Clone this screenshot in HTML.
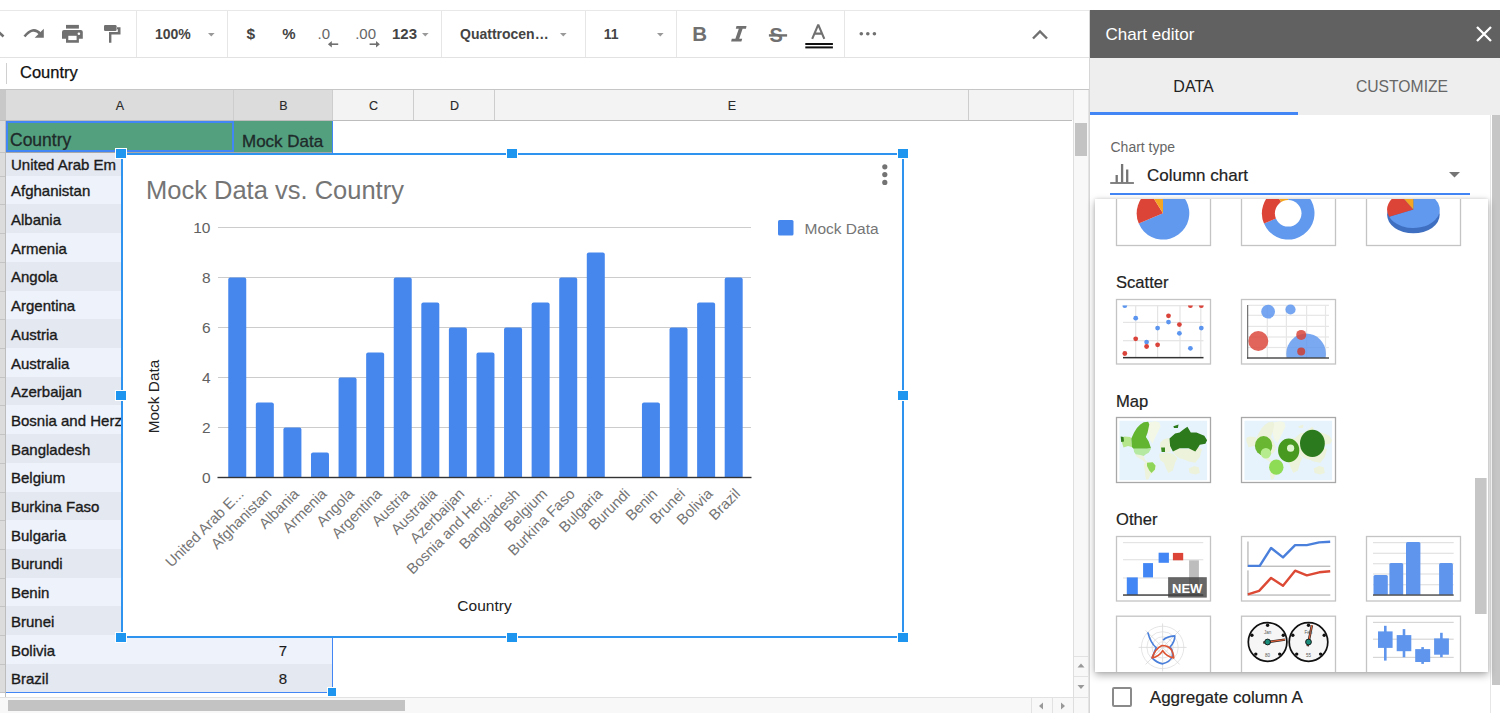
<!DOCTYPE html>
<html><head><meta charset="utf-8">
<style>
*{box-sizing:border-box;margin:0;padding:0}
html,body{width:1500px;height:713px;overflow:hidden;background:#fff;font-family:"Liberation Sans",sans-serif;position:relative}
.a{position:absolute}
svg{position:absolute;overflow:visible}
</style></head>
<body>

<div class="a" style="left:0px;top:10px;width:1090px;height:1px;background:#e8e8e8;"></div>
<div class="a" style="left:0px;top:57px;width:1090px;height:1px;background:#e2e2e2;"></div>
<div class="a" style="left:136px;top:11px;width:1px;height:46px;background:#e6e6e6;"></div>
<div class="a" style="left:227px;top:11px;width:1px;height:46px;background:#e6e6e6;"></div>
<div class="a" style="left:441px;top:11px;width:1px;height:46px;background:#e6e6e6;"></div>
<div class="a" style="left:585px;top:11px;width:1px;height:46px;background:#e6e6e6;"></div>
<div class="a" style="left:676px;top:11px;width:1px;height:46px;background:#e6e6e6;"></div>
<div class="a" style="left:844px;top:11px;width:1px;height:46px;background:#e6e6e6;"></div>
<svg style="left:0;top:0" width="1090" height="57">
<path d="M-2 31.5 L3.5 36.5" stroke="#707070" stroke-width="2.6" fill="none"/>
<path d="M24.5 36.5 Q33 26 40 33.5" stroke="#707070" stroke-width="2.6" fill="none"/>
<path d="M43.8 28.8 V37.8 H34.7 Z" fill="#707070"/>
<rect x="66" y="24.9" width="12.9" height="3.7" fill="#707070"/>
<path d="M64 30.1 H80.8 Q82.8 30.1 82.8 32.1 V38.8 H78.9 V42.7 H66 V38.8 H62 V32.1 Q62 30.1 64 30.1 Z" fill="#707070"/>
<rect x="68.3" y="35.8" width="8.3" height="4.3" fill="#fff"/>
<circle cx="78.9" cy="33.8" r="1.3" fill="#fff"/>
<rect x="104" y="24.9" width="12.6" height="6.1" rx="1.3" fill="#707070"/>
<path d="M117 27.3 H120.5 V34.5 H111.4 V42.7 H109 V31.9 H117.8 V29.2 H117 Z" fill="#707070"/>
<rect x="768.9" y="34.2" width="18.2" height="2.4" fill="#707070"/>
<path d="M736.5 26.1 H746.5 L746 28.8 H742.6 L739.2 38.8 H742.2 L741.4 41.5 H731.1 L731.8 38.8 H735.4 L738.8 28.8 H735.8 Z" fill="#707070"/>
<rect x="805.3" y="43" width="27.6" height="2" fill="#111"/>
<rect x="805.3" y="46.4" width="27.6" height="2" fill="#111"/>
<circle cx="861.3" cy="33.7" r="1.8" fill="#707070"/>
<circle cx="867.8" cy="33.7" r="1.8" fill="#707070"/>
<circle cx="874.4" cy="33.7" r="1.8" fill="#707070"/>
<path d="M338.2 44.2 H330" stroke="#707070" stroke-width="1.6"/><path d="M327.9 44.2 L331.8 41 V47.4 Z" fill="#707070"/>
<path d="M369.6 44.2 H377.8" stroke="#707070" stroke-width="1.6"/><path d="M379.9 44.2 L376 41 V47.4 Z" fill="#707070"/>
<path d="M1033 38.5 L1040 31.5 L1047 38.5" stroke="#707070" stroke-width="2.4" fill="none"/>
</svg>
<div class="a" style="left:155px;top:27.10px;font-size:14px;line-height:14px;color:#444;font-weight:bold;white-space:nowrap;">100%</div>
<svg style="left:208px;top:33px" width="7" height="4"><path d="M0 0H6.6L3.3 3.5Z" fill="#999"/></svg>
<div class="a" style="left:246.5px;top:26.03px;font-size:15.5px;line-height:15.5px;color:#444;font-weight:bold;white-space:nowrap;">$</div>
<div class="a" style="left:282.3px;top:26.45px;font-size:15px;line-height:15px;color:#444;font-weight:bold;white-space:nowrap;">%</div>
<div class="a" style="left:317.6px;top:26.05px;font-size:15px;line-height:15px;color:#666;font-weight:normal;white-space:nowrap;">.0</div>
<div class="a" style="left:355.2px;top:26.05px;font-size:15px;line-height:15px;color:#666;font-weight:normal;white-space:nowrap;">.00</div>
<div class="a" style="left:392px;top:26.45px;font-size:15px;line-height:15px;color:#444;font-weight:bold;white-space:nowrap;">123</div>
<svg style="left:422px;top:33px" width="7" height="4"><path d="M0 0H6.6L3.3 3.5Z" fill="#999"/></svg>
<div class="a" style="left:460px;top:27.20px;font-size:14px;line-height:14px;color:#444;font-weight:bold;white-space:nowrap;">Quattrocen…</div>
<svg style="left:560px;top:32.7px" width="7" height="4"><path d="M0 0H6.6L3.3 3.5Z" fill="#999"/></svg>
<div class="a" style="left:603.8px;top:27.20px;font-size:14px;line-height:14px;color:#444;font-weight:bold;white-space:nowrap;">11</div>
<svg style="left:656.8px;top:32.7px" width="7" height="4"><path d="M0 0H6.6L3.3 3.5Z" fill="#999"/></svg>
<div class="a" style="left:692.3px;top:24.07px;font-size:20.5px;line-height:20.5px;color:#707070;font-weight:bold;white-space:nowrap;">B</div>
<div class="a" style="left:769.6px;top:24.50px;font-size:20px;line-height:20px;color:#707070;font-weight:bold;white-space:nowrap;">S</div>
<svg style="left:0;top:0" width="1090" height="57"><path d="M812.2 38.8 L818.25 24.6 L824.3 38.8 M814.3 33.6 H822.2" stroke="#707070" stroke-width="2.1" stroke-linejoin="bevel" fill="none"/></svg>
<div class="a" style="left:6px;top:63px;width:1px;height:21px;background:#d0d0d0;"></div>
<div class="a" style="left:20px;top:64.47px;font-size:16.5px;line-height:16.5px;color:#111;font-weight:normal;white-space:nowrap;-webkit-text-stroke:0.25px #111">Country</div>
<div class="a" style="left:0px;top:89px;width:1090px;height:1px;background:#c6c6c6;"></div>
<div class="a" style="left:0px;top:90px;width:1072px;height:30px;background:#f3f3f3;"></div>
<div class="a" style="left:0px;top:90px;width:6px;height:30px;background:#c8c8c8;"></div>
<div class="a" style="left:6px;top:90px;width:228px;height:30px;background:#dcdcdc;"></div>
<div class="a" style="left:233px;top:90px;width:1px;height:30px;background:#cdcdcd;"></div>
<div class="a" style="left:-180.0px;width:600px;text-align:center;top:99.58px;font-size:12.5px;line-height:12.5px;color:#2a2a2a;font-weight:normal;white-space:nowrap;-webkit-text-stroke:0.15px #2a2a2a">A</div>
<div class="a" style="left:234px;top:90px;width:99px;height:30px;background:#dcdcdc;"></div>
<div class="a" style="left:332px;top:90px;width:1px;height:30px;background:#cdcdcd;"></div>
<div class="a" style="left:-16.5px;width:600px;text-align:center;top:99.58px;font-size:12.5px;line-height:12.5px;color:#2a2a2a;font-weight:normal;white-space:nowrap;-webkit-text-stroke:0.15px #2a2a2a">B</div>
<div class="a" style="left:413px;top:90px;width:1px;height:30px;background:#cdcdcd;"></div>
<div class="a" style="left:73.5px;width:600px;text-align:center;top:99.58px;font-size:12.5px;line-height:12.5px;color:#2a2a2a;font-weight:normal;white-space:nowrap;-webkit-text-stroke:0.15px #2a2a2a">C</div>
<div class="a" style="left:494px;top:90px;width:1px;height:30px;background:#cdcdcd;"></div>
<div class="a" style="left:154.5px;width:600px;text-align:center;top:99.58px;font-size:12.5px;line-height:12.5px;color:#2a2a2a;font-weight:normal;white-space:nowrap;-webkit-text-stroke:0.15px #2a2a2a">D</div>
<div class="a" style="left:968px;top:90px;width:1px;height:30px;background:#cdcdcd;"></div>
<div class="a" style="left:432.0px;width:600px;text-align:center;top:99.58px;font-size:12.5px;line-height:12.5px;color:#2a2a2a;font-weight:normal;white-space:nowrap;-webkit-text-stroke:0.15px #2a2a2a">E</div>
<div class="a" style="left:1071px;top:90px;width:1px;height:30px;background:#cdcdcd;"></div>
<div class="a" style="left:0px;top:120px;width:1072px;height:1px;background:#bdbdbd;"></div>
<div class="a" style="left:0px;top:121px;width:6px;height:571px;background:#dcdcdc;"></div>
<div class="a" style="left:5px;top:121px;width:1px;height:576px;background:#bdbdbd;"></div>
<div class="a" style="left:6px;top:121px;width:327px;height:31px;background:#53a07f;"></div>
<div class="a" style="left:10px;top:132.12px;font-size:17.5px;line-height:17.5px;color:#1f2a2a;font-weight:normal;white-space:nowrap;-webkit-text-stroke:0.3px #1f2a2a">Country</div>
<div class="a" style="left:242px;top:132.55px;font-size:17px;line-height:17px;color:#1f2a2a;font-weight:normal;white-space:nowrap;-webkit-text-stroke:0.3px #1f2a2a">Mock Data</div>
<div class="a" style="left:6px;top:152px;width:327px;height:24px;background:#e4e8f1;"></div>
<div class="a" style="left:11px;top:157.25px;font-size:15px;line-height:15px;color:#1a1a1a;font-weight:normal;white-space:nowrap;-webkit-text-stroke:0.35px #1a1a1a">United Arab Em</div>
<div class="a" style="left:0px;top:152px;width:6px;height:1px;background:#c4c4c4;"></div>
<div class="a" style="left:6px;top:176px;width:327px;height:28px;background:#eef2fb"></div>
<div class="a" style="left:0px;top:176px;width:6px;height:1px;background:#c4c4c4;"></div>
<div class="a" style="left:11px;top:183.35px;font-size:15px;line-height:15px;color:#1a1a1a;font-weight:normal;white-space:nowrap;-webkit-text-stroke:0.35px #1a1a1a">Afghanistan</div>
<div class="a" style="left:-17px;width:600px;text-align:center;top:183.35px;font-size:15px;line-height:15px;color:#1a1a1a;font-weight:normal;white-space:nowrap;-webkit-text-stroke:0.15px #1a1a1a">3</div>
<div class="a" style="left:6px;top:204px;width:327px;height:29px;background:#e4e8f1"></div>
<div class="a" style="left:0px;top:204px;width:6px;height:1px;background:#c4c4c4;"></div>
<div class="a" style="left:11px;top:212.05px;font-size:15px;line-height:15px;color:#1a1a1a;font-weight:normal;white-space:nowrap;-webkit-text-stroke:0.35px #1a1a1a">Albania</div>
<div class="a" style="left:-17px;width:600px;text-align:center;top:212.05px;font-size:15px;line-height:15px;color:#1a1a1a;font-weight:normal;white-space:nowrap;-webkit-text-stroke:0.15px #1a1a1a">2</div>
<div class="a" style="left:6px;top:233px;width:327px;height:29px;background:#eef2fb"></div>
<div class="a" style="left:0px;top:233px;width:6px;height:1px;background:#c4c4c4;"></div>
<div class="a" style="left:11px;top:240.75px;font-size:15px;line-height:15px;color:#1a1a1a;font-weight:normal;white-space:nowrap;-webkit-text-stroke:0.35px #1a1a1a">Armenia</div>
<div class="a" style="left:-17px;width:600px;text-align:center;top:240.75px;font-size:15px;line-height:15px;color:#1a1a1a;font-weight:normal;white-space:nowrap;-webkit-text-stroke:0.15px #1a1a1a">1</div>
<div class="a" style="left:6px;top:262px;width:327px;height:29px;background:#e4e8f1"></div>
<div class="a" style="left:0px;top:262px;width:6px;height:1px;background:#c4c4c4;"></div>
<div class="a" style="left:11px;top:269.45px;font-size:15px;line-height:15px;color:#1a1a1a;font-weight:normal;white-space:nowrap;-webkit-text-stroke:0.35px #1a1a1a">Angola</div>
<div class="a" style="left:-17px;width:600px;text-align:center;top:269.45px;font-size:15px;line-height:15px;color:#1a1a1a;font-weight:normal;white-space:nowrap;-webkit-text-stroke:0.15px #1a1a1a">4</div>
<div class="a" style="left:6px;top:291px;width:327px;height:28px;background:#eef2fb"></div>
<div class="a" style="left:0px;top:291px;width:6px;height:1px;background:#c4c4c4;"></div>
<div class="a" style="left:11px;top:298.15px;font-size:15px;line-height:15px;color:#1a1a1a;font-weight:normal;white-space:nowrap;-webkit-text-stroke:0.35px #1a1a1a">Argentina</div>
<div class="a" style="left:-17px;width:600px;text-align:center;top:298.15px;font-size:15px;line-height:15px;color:#1a1a1a;font-weight:normal;white-space:nowrap;-webkit-text-stroke:0.15px #1a1a1a">5</div>
<div class="a" style="left:6px;top:319px;width:327px;height:29px;background:#e4e8f1"></div>
<div class="a" style="left:0px;top:319px;width:6px;height:1px;background:#c4c4c4;"></div>
<div class="a" style="left:11px;top:326.85px;font-size:15px;line-height:15px;color:#1a1a1a;font-weight:normal;white-space:nowrap;-webkit-text-stroke:0.35px #1a1a1a">Austria</div>
<div class="a" style="left:-17px;width:600px;text-align:center;top:326.85px;font-size:15px;line-height:15px;color:#1a1a1a;font-weight:normal;white-space:nowrap;-webkit-text-stroke:0.15px #1a1a1a">8</div>
<div class="a" style="left:6px;top:348px;width:327px;height:29px;background:#eef2fb"></div>
<div class="a" style="left:0px;top:348px;width:6px;height:1px;background:#c4c4c4;"></div>
<div class="a" style="left:11px;top:355.55px;font-size:15px;line-height:15px;color:#1a1a1a;font-weight:normal;white-space:nowrap;-webkit-text-stroke:0.35px #1a1a1a">Australia</div>
<div class="a" style="left:-17px;width:600px;text-align:center;top:355.55px;font-size:15px;line-height:15px;color:#1a1a1a;font-weight:normal;white-space:nowrap;-webkit-text-stroke:0.15px #1a1a1a">7</div>
<div class="a" style="left:6px;top:377px;width:327px;height:28px;background:#e4e8f1"></div>
<div class="a" style="left:0px;top:377px;width:6px;height:1px;background:#c4c4c4;"></div>
<div class="a" style="left:11px;top:384.25px;font-size:15px;line-height:15px;color:#1a1a1a;font-weight:normal;white-space:nowrap;-webkit-text-stroke:0.35px #1a1a1a">Azerbaijan</div>
<div class="a" style="left:-17px;width:600px;text-align:center;top:384.25px;font-size:15px;line-height:15px;color:#1a1a1a;font-weight:normal;white-space:nowrap;-webkit-text-stroke:0.15px #1a1a1a">6</div>
<div class="a" style="left:6px;top:405px;width:327px;height:29px;background:#eef2fb"></div>
<div class="a" style="left:0px;top:405px;width:6px;height:1px;background:#c4c4c4;"></div>
<div class="a" style="left:11px;top:412.95px;font-size:15px;line-height:15px;color:#1a1a1a;font-weight:normal;white-space:nowrap;-webkit-text-stroke:0.35px #1a1a1a">Bosnia and Herz</div>
<div class="a" style="left:-17px;width:600px;text-align:center;top:412.95px;font-size:15px;line-height:15px;color:#1a1a1a;font-weight:normal;white-space:nowrap;-webkit-text-stroke:0.15px #1a1a1a">5</div>
<div class="a" style="left:6px;top:434px;width:327px;height:29px;background:#e4e8f1"></div>
<div class="a" style="left:0px;top:434px;width:6px;height:1px;background:#c4c4c4;"></div>
<div class="a" style="left:11px;top:441.65px;font-size:15px;line-height:15px;color:#1a1a1a;font-weight:normal;white-space:nowrap;-webkit-text-stroke:0.35px #1a1a1a">Bangladesh</div>
<div class="a" style="left:-17px;width:600px;text-align:center;top:441.65px;font-size:15px;line-height:15px;color:#1a1a1a;font-weight:normal;white-space:nowrap;-webkit-text-stroke:0.15px #1a1a1a">6</div>
<div class="a" style="left:6px;top:463px;width:327px;height:29px;background:#eef2fb"></div>
<div class="a" style="left:0px;top:463px;width:6px;height:1px;background:#c4c4c4;"></div>
<div class="a" style="left:11px;top:470.35px;font-size:15px;line-height:15px;color:#1a1a1a;font-weight:normal;white-space:nowrap;-webkit-text-stroke:0.35px #1a1a1a">Belgium</div>
<div class="a" style="left:-17px;width:600px;text-align:center;top:470.35px;font-size:15px;line-height:15px;color:#1a1a1a;font-weight:normal;white-space:nowrap;-webkit-text-stroke:0.15px #1a1a1a">7</div>
<div class="a" style="left:6px;top:492px;width:327px;height:28px;background:#e4e8f1"></div>
<div class="a" style="left:0px;top:492px;width:6px;height:1px;background:#c4c4c4;"></div>
<div class="a" style="left:11px;top:499.05px;font-size:15px;line-height:15px;color:#1a1a1a;font-weight:normal;white-space:nowrap;-webkit-text-stroke:0.35px #1a1a1a">Burkina Faso</div>
<div class="a" style="left:-17px;width:600px;text-align:center;top:499.05px;font-size:15px;line-height:15px;color:#1a1a1a;font-weight:normal;white-space:nowrap;-webkit-text-stroke:0.15px #1a1a1a">8</div>
<div class="a" style="left:6px;top:520px;width:327px;height:29px;background:#eef2fb"></div>
<div class="a" style="left:0px;top:520px;width:6px;height:1px;background:#c4c4c4;"></div>
<div class="a" style="left:11px;top:527.75px;font-size:15px;line-height:15px;color:#1a1a1a;font-weight:normal;white-space:nowrap;-webkit-text-stroke:0.35px #1a1a1a">Bulgaria</div>
<div class="a" style="left:-17px;width:600px;text-align:center;top:527.75px;font-size:15px;line-height:15px;color:#1a1a1a;font-weight:normal;white-space:nowrap;-webkit-text-stroke:0.15px #1a1a1a">9</div>
<div class="a" style="left:6px;top:549px;width:327px;height:29px;background:#e4e8f1"></div>
<div class="a" style="left:0px;top:549px;width:6px;height:1px;background:#c4c4c4;"></div>
<div class="a" style="left:11px;top:556.45px;font-size:15px;line-height:15px;color:#1a1a1a;font-weight:normal;white-space:nowrap;-webkit-text-stroke:0.35px #1a1a1a">Burundi</div>
<div class="a" style="left:-17px;width:600px;text-align:center;top:556.45px;font-size:15px;line-height:15px;color:#1a1a1a;font-weight:normal;white-space:nowrap;-webkit-text-stroke:0.15px #1a1a1a">0</div>
<div class="a" style="left:6px;top:578px;width:327px;height:28px;background:#eef2fb"></div>
<div class="a" style="left:0px;top:578px;width:6px;height:1px;background:#c4c4c4;"></div>
<div class="a" style="left:11px;top:585.15px;font-size:15px;line-height:15px;color:#1a1a1a;font-weight:normal;white-space:nowrap;-webkit-text-stroke:0.35px #1a1a1a">Benin</div>
<div class="a" style="left:-17px;width:600px;text-align:center;top:585.15px;font-size:15px;line-height:15px;color:#1a1a1a;font-weight:normal;white-space:nowrap;-webkit-text-stroke:0.15px #1a1a1a">3</div>
<div class="a" style="left:6px;top:606px;width:327px;height:29px;background:#e4e8f1"></div>
<div class="a" style="left:0px;top:606px;width:6px;height:1px;background:#c4c4c4;"></div>
<div class="a" style="left:11px;top:613.85px;font-size:15px;line-height:15px;color:#1a1a1a;font-weight:normal;white-space:nowrap;-webkit-text-stroke:0.35px #1a1a1a">Brunei</div>
<div class="a" style="left:-17px;width:600px;text-align:center;top:613.85px;font-size:15px;line-height:15px;color:#1a1a1a;font-weight:normal;white-space:nowrap;-webkit-text-stroke:0.15px #1a1a1a">6</div>
<div class="a" style="left:6px;top:635px;width:327px;height:29px;background:#eef2fb"></div>
<div class="a" style="left:0px;top:635px;width:6px;height:1px;background:#c4c4c4;"></div>
<div class="a" style="left:11px;top:642.55px;font-size:15px;line-height:15px;color:#1a1a1a;font-weight:normal;white-space:nowrap;-webkit-text-stroke:0.35px #1a1a1a">Bolivia</div>
<div class="a" style="left:-17px;width:600px;text-align:center;top:642.55px;font-size:15px;line-height:15px;color:#1a1a1a;font-weight:normal;white-space:nowrap;-webkit-text-stroke:0.15px #1a1a1a">7</div>
<div class="a" style="left:6px;top:664px;width:327px;height:28px;background:#e4e8f1"></div>
<div class="a" style="left:0px;top:664px;width:6px;height:1px;background:#c4c4c4;"></div>
<div class="a" style="left:11px;top:671.25px;font-size:15px;line-height:15px;color:#1a1a1a;font-weight:normal;white-space:nowrap;-webkit-text-stroke:0.35px #1a1a1a">Brazil</div>
<div class="a" style="left:-17px;width:600px;text-align:center;top:671.25px;font-size:15px;line-height:15px;color:#1a1a1a;font-weight:normal;white-space:nowrap;-webkit-text-stroke:0.15px #1a1a1a">8</div>
<div class="a" style="left:0px;top:692px;width:6px;height:1px;background:#c4c4c4;"></div>
<div class="a" style="left:6px;top:152px;width:327px;height:1px;background:#a8a8a8;"></div>
<div class="a" style="left:6px;top:121px;width:228px;height:2px;background:#4285f4;"></div>
<div class="a" style="left:6px;top:150px;width:228px;height:2px;background:#4285f4;"></div>
<div class="a" style="left:6px;top:121px;width:2px;height:31px;background:#4285f4;"></div>
<div class="a" style="left:232px;top:121px;width:2px;height:31px;background:#4285f4;"></div>
<div class="a" style="left:5px;top:152px;width:1px;height:541px;background:#bdbdbd;"></div>
<div class="a" style="left:332px;top:121px;width:1px;height:572px;background:#4285f4;"></div>
<div class="a" style="left:6px;top:692px;width:327px;height:1px;background:#4285f4;"></div>
<div class="a" style="left:327px;top:687px;width:10px;height:10px;background:#1e96f0;border:1px solid #fff"></div>
<div class="a" style="left:121px;top:153px;width:783px;height:485px;background:#fff;border:2px solid #2e93ee"></div>
<svg style="left:0;top:0" width="1500" height="713" viewBox="0 0 1500 713">
<rect x="218" y="427.0" width="533" height="1" fill="#cccccc"/>
<rect x="218" y="377.0" width="533" height="1" fill="#cccccc"/>
<rect x="218" y="327.0" width="533" height="1" fill="#cccccc"/>
<rect x="218" y="277.0" width="533" height="1" fill="#cccccc"/>
<rect x="218" y="227.0" width="533" height="1" fill="#cccccc"/>
<text x="210.5" y="483.1" text-anchor="end" font-family="Liberation Sans" font-size="15.5" fill="#616161">0</text>
<text x="210.5" y="433.1" text-anchor="end" font-family="Liberation Sans" font-size="15.5" fill="#616161">2</text>
<text x="210.5" y="383.1" text-anchor="end" font-family="Liberation Sans" font-size="15.5" fill="#616161">4</text>
<text x="210.5" y="333.1" text-anchor="end" font-family="Liberation Sans" font-size="15.5" fill="#616161">6</text>
<text x="210.5" y="283.1" text-anchor="end" font-family="Liberation Sans" font-size="15.5" fill="#616161">8</text>
<text x="210.5" y="233.1" text-anchor="end" font-family="Liberation Sans" font-size="15.5" fill="#616161">10</text>
<path d="M228.25 477.5V279.5Q228.25 277.5 230.25 277.5H244.25Q246.25 277.5 246.25 279.5V477.5Z" fill="#4687ee"/>
<text transform="translate(244.75 494.8) rotate(-45)" text-anchor="end" font-family="Liberation Sans" font-size="14.8" fill="#757575">United Arab E...</text>
<path d="M255.82999999999998 477.5V404.5Q255.82999999999998 402.5 257.83 402.5H271.83Q273.83 402.5 273.83 404.5V477.5Z" fill="#4687ee"/>
<text transform="translate(272.33 494.8) rotate(-45)" text-anchor="end" font-family="Liberation Sans" font-size="14.8" fill="#757575">Afghanistan</text>
<path d="M283.40999999999997 477.5V429.5Q283.40999999999997 427.5 285.40999999999997 427.5H299.40999999999997Q301.40999999999997 427.5 301.40999999999997 429.5V477.5Z" fill="#4687ee"/>
<text transform="translate(299.90999999999997 494.8) rotate(-45)" text-anchor="end" font-family="Liberation Sans" font-size="14.8" fill="#757575">Albania</text>
<path d="M310.99 477.5V454.5Q310.99 452.5 312.99 452.5H326.99Q328.99 452.5 328.99 454.5V477.5Z" fill="#4687ee"/>
<text transform="translate(327.49 494.8) rotate(-45)" text-anchor="end" font-family="Liberation Sans" font-size="14.8" fill="#757575">Armenia</text>
<path d="M338.57 477.5V379.5Q338.57 377.5 340.57 377.5H354.57Q356.57 377.5 356.57 379.5V477.5Z" fill="#4687ee"/>
<text transform="translate(355.07 494.8) rotate(-45)" text-anchor="end" font-family="Liberation Sans" font-size="14.8" fill="#757575">Angola</text>
<path d="M366.15 477.5V354.5Q366.15 352.5 368.15 352.5H382.15Q384.15 352.5 384.15 354.5V477.5Z" fill="#4687ee"/>
<text transform="translate(382.65 494.8) rotate(-45)" text-anchor="end" font-family="Liberation Sans" font-size="14.8" fill="#757575">Argentina</text>
<path d="M393.73 477.5V279.5Q393.73 277.5 395.73 277.5H409.73Q411.73 277.5 411.73 279.5V477.5Z" fill="#4687ee"/>
<text transform="translate(410.23 494.8) rotate(-45)" text-anchor="end" font-family="Liberation Sans" font-size="14.8" fill="#757575">Austria</text>
<path d="M421.31 477.5V304.5Q421.31 302.5 423.31 302.5H437.31Q439.31 302.5 439.31 304.5V477.5Z" fill="#4687ee"/>
<text transform="translate(437.81 494.8) rotate(-45)" text-anchor="end" font-family="Liberation Sans" font-size="14.8" fill="#757575">Australia</text>
<path d="M448.89 477.5V329.5Q448.89 327.5 450.89 327.5H464.89Q466.89 327.5 466.89 329.5V477.5Z" fill="#4687ee"/>
<text transform="translate(465.39 494.8) rotate(-45)" text-anchor="end" font-family="Liberation Sans" font-size="14.8" fill="#757575">Azerbaijan</text>
<path d="M476.46999999999997 477.5V354.5Q476.46999999999997 352.5 478.46999999999997 352.5H492.46999999999997Q494.46999999999997 352.5 494.46999999999997 354.5V477.5Z" fill="#4687ee"/>
<text transform="translate(492.96999999999997 494.8) rotate(-45)" text-anchor="end" font-family="Liberation Sans" font-size="14.8" fill="#757575">Bosnia and Her...</text>
<path d="M504.04999999999995 477.5V329.5Q504.04999999999995 327.5 506.04999999999995 327.5H520.05Q522.05 327.5 522.05 329.5V477.5Z" fill="#4687ee"/>
<text transform="translate(520.55 494.8) rotate(-45)" text-anchor="end" font-family="Liberation Sans" font-size="14.8" fill="#757575">Bangladesh</text>
<path d="M531.63 477.5V304.5Q531.63 302.5 533.63 302.5H547.63Q549.63 302.5 549.63 304.5V477.5Z" fill="#4687ee"/>
<text transform="translate(548.13 494.8) rotate(-45)" text-anchor="end" font-family="Liberation Sans" font-size="14.8" fill="#757575">Belgium</text>
<path d="M559.21 477.5V279.5Q559.21 277.5 561.21 277.5H575.21Q577.21 277.5 577.21 279.5V477.5Z" fill="#4687ee"/>
<text transform="translate(575.71 494.8) rotate(-45)" text-anchor="end" font-family="Liberation Sans" font-size="14.8" fill="#757575">Burkina Faso</text>
<path d="M586.79 477.5V254.5Q586.79 252.5 588.79 252.5H602.79Q604.79 252.5 604.79 254.5V477.5Z" fill="#4687ee"/>
<text transform="translate(603.29 494.8) rotate(-45)" text-anchor="end" font-family="Liberation Sans" font-size="14.8" fill="#757575">Bulgaria</text>
<text transform="translate(630.87 494.8) rotate(-45)" text-anchor="end" font-family="Liberation Sans" font-size="14.8" fill="#757575">Burundi</text>
<path d="M641.95 477.5V404.5Q641.95 402.5 643.95 402.5H657.95Q659.95 402.5 659.95 404.5V477.5Z" fill="#4687ee"/>
<text transform="translate(658.45 494.8) rotate(-45)" text-anchor="end" font-family="Liberation Sans" font-size="14.8" fill="#757575">Benin</text>
<path d="M669.53 477.5V329.5Q669.53 327.5 671.53 327.5H685.53Q687.53 327.5 687.53 329.5V477.5Z" fill="#4687ee"/>
<text transform="translate(686.03 494.8) rotate(-45)" text-anchor="end" font-family="Liberation Sans" font-size="14.8" fill="#757575">Brunei</text>
<path d="M697.1099999999999 477.5V304.5Q697.1099999999999 302.5 699.1099999999999 302.5H713.1099999999999Q715.1099999999999 302.5 715.1099999999999 304.5V477.5Z" fill="#4687ee"/>
<text transform="translate(713.6099999999999 494.8) rotate(-45)" text-anchor="end" font-family="Liberation Sans" font-size="14.8" fill="#757575">Bolivia</text>
<path d="M724.6899999999999 477.5V279.5Q724.6899999999999 277.5 726.6899999999999 277.5H740.6899999999999Q742.6899999999999 277.5 742.6899999999999 279.5V477.5Z" fill="#4687ee"/>
<text transform="translate(741.1899999999999 494.8) rotate(-45)" text-anchor="end" font-family="Liberation Sans" font-size="14.8" fill="#757575">Brazil</text>
<rect x="217.5" y="476.8" width="534" height="1.4" fill="#333"/>
<text x="146" y="199" font-family="Liberation Sans" font-size="25.5" fill="#757575">Mock Data vs. Country</text>
<text transform="translate(158.5 396.5) rotate(-90)" text-anchor="middle" font-family="Liberation Sans" font-size="15.4" fill="#222">Mock Data</text>
<text x="484.5" y="611" text-anchor="middle" font-family="Liberation Sans" font-size="15.5" fill="#222">Country</text>
<rect x="778" y="220" width="15.5" height="15.5" rx="1.5" fill="#4687ee"/>
<text x="804.5" y="234" font-family="Liberation Sans" font-size="15.5" fill="#757575">Mock Data</text>
<circle cx="884.8" cy="166.8" r="2.6" fill="#737373"/>
<circle cx="884.8" cy="174.6" r="2.6" fill="#737373"/>
<circle cx="884.8" cy="182.4" r="2.6" fill="#737373"/>
</svg>
<div class="a" style="left:115px;top:147.5px;width:12px;height:11px;background:#1e96f0;border:1px solid #fff"></div>
<div class="a" style="left:506px;top:147.5px;width:12px;height:11px;background:#1e96f0;border:1px solid #fff"></div>
<div class="a" style="left:897px;top:147.5px;width:12px;height:11px;background:#1e96f0;border:1px solid #fff"></div>
<div class="a" style="left:115px;top:389.5px;width:12px;height:11px;background:#1e96f0;border:1px solid #fff"></div>
<div class="a" style="left:897px;top:389.5px;width:12px;height:11px;background:#1e96f0;border:1px solid #fff"></div>
<div class="a" style="left:115px;top:631.5px;width:12px;height:11px;background:#1e96f0;border:1px solid #fff"></div>
<div class="a" style="left:506px;top:631.5px;width:12px;height:11px;background:#1e96f0;border:1px solid #fff"></div>
<div class="a" style="left:897px;top:631.5px;width:12px;height:11px;background:#1e96f0;border:1px solid #fff"></div>
<div class="a" style="left:969px;top:90px;width:104px;height:30px;background:#f3f3f3;"></div>
<div class="a" style="left:1073px;top:90px;width:16px;height:623px;background:#f8f8f8;"></div>
<div class="a" style="left:1073px;top:90px;width:1px;height:623px;background:#dedede;"></div>
<div class="a" style="left:1088px;top:90px;width:1px;height:623px;background:#e4e4e4;"></div>
<div class="a" style="left:1075px;top:123px;width:12px;height:33px;background:#c3c3c3;"></div>
<div class="a" style="left:1074px;top:656px;width:14px;height:1px;background:#e2e2e2;"></div>
<div class="a" style="left:1074px;top:676px;width:14px;height:1px;background:#e2e2e2;"></div>
<div class="a" style="left:1074px;top:697px;width:14px;height:1px;background:#e2e2e2;"></div>
<div class="a" style="left:0px;top:697px;width:1073px;height:1px;background:#e2e2e2;"></div>
<div class="a" style="left:0px;top:698px;width:1073px;height:15px;background:#f8f8f8;"></div>
<div class="a" style="left:8px;top:700px;width:397px;height:11px;background:#c3c3c3;"></div>
<div class="a" style="left:1031px;top:698px;width:1px;height:15px;background:#e2e2e2;"></div>
<div class="a" style="left:1052px;top:698px;width:1px;height:15px;background:#e2e2e2;"></div>
<svg style="left:0;top:0" width="1500" height="713"><path d="M1077.5 667.5 H1084.5 L1081 663.5 Z" fill="#999"/><path d="M1077.5 685 H1084.5 L1081 689 Z" fill="#999"/><path d="M1043 702.5 V709.5 L1039 706 Z" fill="#999"/><path d="M1061 702.5 V709.5 L1065 706 Z" fill="#999"/></svg>
<div class="a" style="left:1089px;top:0px;width:411px;height:713px;background:#fff;"></div>
<div class="a" style="left:1089px;top:10px;width:411px;height:48px;background:#616161;"></div>
<div class="a" style="left:1105.5px;top:25.55px;font-size:17px;line-height:17px;color:#fff;font-weight:normal;white-space:nowrap;">Chart editor</div>
<svg style="left:1476px;top:26px" width="16" height="16"><path d="M1 1 L15 15 M15 1 L1 15" stroke="#fff" stroke-width="2.3"/></svg>
<div class="a" style="left:1089px;top:58px;width:411px;height:57px;background:#eeeeee;"></div>
<div class="a" style="left:893.5px;width:600px;text-align:center;top:78.90px;font-size:16px;line-height:16px;color:#222;font-weight:normal;white-space:nowrap;">DATA</div>
<div class="a" style="left:1102px;width:600px;text-align:center;top:79.16px;font-size:15.7px;line-height:15.7px;color:#666;font-weight:normal;white-space:nowrap;">CUSTOMIZE</div>
<div class="a" style="left:1089px;top:112px;width:209px;height:3px;background:#4285f4;"></div>
<div class="a" style="left:1089px;top:10px;width:1px;height:703px;background:#d6d6d6;"></div>
<div class="a" style="left:1490px;top:115px;width:1px;height:598px;background:#e6e6e6;"></div>
<div class="a" style="left:1492px;top:115px;width:8px;height:570px;background:#c6c6c6;"></div>
<div class="a" style="left:1110.5px;top:140.10px;font-size:14px;line-height:14px;color:#666;font-weight:normal;white-space:nowrap;">Chart type</div>
<svg style="left:1110px;top:163px" width="25" height="23"><path d="M0.2 20 H23.9" stroke="#757575" stroke-width="1.8"/><path d="M6.7 19.5 V11.9 M12.1 19.5 V1.1 M17.2 19.5 V6.5" stroke="#757575" stroke-width="2.3"/></svg>
<div class="a" style="left:1147px;top:166.55px;font-size:17px;line-height:17px;color:#222;font-weight:normal;white-space:nowrap;-webkit-text-stroke:0.2px #222">Column chart</div>
<svg style="left:1449px;top:172px" width="12" height="7"><path d="M0 0 H11 L5.5 5.5 Z" fill="#757575"/></svg>
<div class="a" style="left:1110px;top:193px;width:360px;height:2px;background:#4285f4;"></div>
<div class="a" style="left:1095px;top:199px;width:393px;height:473px;background:#fff;box-shadow:0 3px 8px rgba(0,0,0,0.32), 0 0 3px rgba(0,0,0,0.12);overflow:hidden">
<svg style="left:0;top:0" width="393" height="474">
<rect x="21.5" y="-18.5" width="94" height="65" fill="#fff" stroke="#c4c4c4" stroke-width="1.3"/>
<rect x="146.5" y="-18.5" width="94" height="65" fill="#fff" stroke="#c4c4c4" stroke-width="1.3"/>
<rect x="271.5" y="-18.5" width="94" height="65" fill="#fff" stroke="#c4c4c4" stroke-width="1.3"/>
<path d="M68 14.300000000000011 L68.00 -12.00 A26.3 26.3 0 1 1 43.79 24.58 Z" fill="#6199ee"/>
<path d="M68 14.300000000000011 L43.79 24.58 A26.3 26.3 0 0 1 54.06 -8.00 Z" fill="#dc4437"/>
<path d="M68 14.300000000000011 L54.06 -8.00 A26.3 26.3 0 0 1 68.00 -12.00 Z" fill="#f4a622"/>
<path d="M193.20000000000005 14.300000000000011 L193.20 -12.00 A26.3 26.3 0 1 1 168.99 24.58 Z" fill="#6199ee"/>
<path d="M193.20000000000005 14.300000000000011 L168.99 24.58 A26.3 26.3 0 0 1 179.26 -8.00 Z" fill="#dc4437"/>
<path d="M193.20000000000005 14.300000000000011 L179.26 -8.00 A26.3 26.3 0 0 1 193.20 -12.00 Z" fill="#f4a622"/>
<circle cx="193.20000000000005" cy="14.300000000000011" r="13.3" fill="#fff"/>
<ellipse cx="318.4000000000001" cy="15.800000000000011" rx="26.3" ry="18.5" fill="#3f6fc0"/>
<path d="M318.4000000000001 10.5 L318.40 -8.00 A26.3 18.5 0 1 1 294.19 17.73 Z" fill="#6199ee"/>
<path d="M318.4000000000001 10.5 L294.19 17.73 A26.3 18.5 0 0 1 304.46 -5.19 Z" fill="#dc4437"/>
<path d="M318.4000000000001 10.5 L304.46 -5.19 A26.3 18.5 0 0 1 318.40 -8.00 Z" fill="#f4a622"/>
<rect x="21.5" y="100.5" width="94" height="64.5" fill="#fff" stroke="#c4c4c4" stroke-width="1.3"/>
<g>
<rect x="28" y="106.09999999999997" width="80.5" height="1.2" fill="#e4e4e4"/>
<rect x="28" y="122.79999999999995" width="80.5" height="1.2" fill="#e4e4e4"/>
<rect x="28" y="141.09999999999997" width="80.5" height="1.2" fill="#e4e4e4"/>
<rect x="40.100000000000136" y="106.69999999999999" width="1.2" height="52" fill="#e4e4e4"/>
<rect x="62.0" y="106.69999999999999" width="1.2" height="52" fill="#e4e4e4"/>
<rect x="84.40000000000009" y="106.69999999999999" width="1.2" height="52" fill="#e4e4e4"/>
<rect x="105.20000000000005" y="106.69999999999999" width="1.2" height="52" fill="#e4e4e4"/>
<clipPath id="cs"><rect x="21" y="106.5" width="95" height="60"/></clipPath><g clip-path="url(#cs)">
<circle cx="29.799999999999955" cy="106.69999999999999" r="2.4" fill="#5b95ef"/>
<circle cx="40.700000000000045" cy="119.19999999999999" r="2.4" fill="#5b95ef"/>
<circle cx="62.59999999999991" cy="129.10000000000002" r="2.4" fill="#5b95ef"/>
<circle cx="73.5" cy="123.10000000000002" r="2.4" fill="#5b95ef"/>
<circle cx="84.40000000000009" cy="134.3" r="2.4" fill="#5b95ef"/>
<circle cx="51.59999999999991" cy="143.10000000000002" r="2.4" fill="#5b95ef"/>
<circle cx="95.40000000000009" cy="149.3" r="2.4" fill="#5b95ef"/>
<circle cx="106.29999999999995" cy="129.10000000000002" r="2.4" fill="#5b95ef"/>
<circle cx="29.799999999999955" cy="154.5" r="2.4" fill="#d9433a"/>
<circle cx="40.700000000000045" cy="139.8" r="2.4" fill="#d9433a"/>
<circle cx="51.59999999999991" cy="147.5" r="2.4" fill="#d9433a"/>
<circle cx="62.59999999999991" cy="145.8" r="2.4" fill="#d9433a"/>
<circle cx="73.5" cy="116.80000000000001" r="2.4" fill="#d9433a"/>
<circle cx="84.40000000000009" cy="125.60000000000002" r="2.4" fill="#d9433a"/>
<circle cx="95.40000000000009" cy="106.69999999999999" r="2.4" fill="#d9433a"/>
<circle cx="106.29999999999995" cy="106.69999999999999" r="2.4" fill="#d9433a"/>
</g></g>
<rect x="28" y="157.89999999999998" width="80.5" height="1.5" fill="#333"/>
<rect x="146.5" y="100.5" width="94" height="64.5" fill="#fff" stroke="#c4c4c4" stroke-width="1.3"/>
<rect x="153" y="105.69999999999999" width="81" height="1.2" fill="#e6e6e6"/>
<rect x="153" y="115.69999999999999" width="81" height="1.2" fill="#e6e6e6"/>
<rect x="153" y="126.79999999999995" width="81" height="1.2" fill="#e6e6e6"/>
<rect x="153" y="137.39999999999998" width="81" height="1.2" fill="#e6e6e6"/>
<rect x="153" y="147.89999999999998" width="81" height="1.2" fill="#e6e6e6"/>
<rect x="171.70000000000005" y="106.30000000000001" width="1.2" height="53" fill="#e6e6e6"/>
<rect x="190.80000000000018" y="106.30000000000001" width="1.2" height="53" fill="#e6e6e6"/>
<rect x="211.0" y="106.30000000000001" width="1.2" height="53" fill="#e6e6e6"/>
<rect x="229.9000000000001" y="106.30000000000001" width="1.2" height="53" fill="#e6e6e6"/>
<clipPath id="cb"><rect x="152" y="101" width="85" height="58"/></clipPath><g clip-path="url(#cb)">
<circle cx="211.0999999999999" cy="154.39999999999998" r="19.8" fill="#5e96ee" fill-opacity="0.82"/>
</g>
<circle cx="173.0999999999999" cy="112.69999999999999" r="6.9" fill="#5e96ee" fill-opacity="0.85"/>
<circle cx="195.5" cy="110.5" r="5.1" fill="#5e96ee" fill-opacity="0.85"/>
<circle cx="163.29999999999995" cy="142" r="10" fill="#dc4a3e" fill-opacity="0.85"/>
<circle cx="206.20000000000005" cy="135.89999999999998" r="5" fill="#d8463b" fill-opacity="0.85"/>
<circle cx="206.20000000000005" cy="152.60000000000002" r="4" fill="#c9443c" fill-opacity="0.9"/>
<rect x="152.20000000000005" y="106" width="1" height="53.5" fill="#555"/>
<rect x="152" y="158.3" width="82" height="1.4" fill="#444"/>
<rect x="21.5" y="218.5" width="94" height="65" fill="#fff" stroke="#a8a8a8" stroke-width="1.3"/>
<rect x="24.5" y="221.7" width="87.6" height="59.5" fill="#e6f3fc"/>
<path d="M52.0 227.8 L54.3 223.3 L59.9 222.2 L64.4 223.3 L65.5 227.8 L62.1 234.6 L58.8 241.3 L57.7 244.7 L54.3 240.2 L52.6 233.4 Z" fill="#f3f8e6"/>
<path d="M39.7 254.8 L48.7 257.0 L49.8 260.4 L53.2 263.8 L50.9 263.8 L46.4 260.4 L41.9 258.1 Z" fill="#edf2da"/>
<path d="M50.9 262.6 L57.7 263.8 L61.0 267.1 L59.9 271.6 L55.4 276.1 L53.2 280.6 L50.9 280.6 L49.8 271.6 L48.7 266.0 Z" fill="#edf2da"/>
<path d="M65.5 243.6 L68.9 240.2 L73.4 239.1 L75.6 240.2 L75.6 252.5 L71.1 253.7 L66.6 252.5 L64.9 248.0 Z" fill="#edf2da"/>
<path d="M64.4 254.8 L71.1 253.7 L77.9 254.8 L82.3 259.3 L80.1 263.8 L77.9 271.6 L73.4 273.9 L71.1 269.4 L68.9 263.8 L65.5 261.5 L64.4 258.1 Z" fill="#edf2da"/>
<path d="M75.6 248.0 L82.3 249.2 L93.6 250.3 L102.6 248.0 L107.0 250.3 L104.8 258.1 L100.3 263.8 L93.6 262.6 L89.1 260.4 L84.6 259.3 L80.1 255.9 Z" fill="#edf2da"/>
<path d="M93.6 269.4 L99.2 267.1 L103.7 268.2 L104.8 273.9 L100.3 275.5 L94.7 273.9 Z" fill="#edf2da"/>
<path d="M26.8 238.5 L29.6 237.4 L35.2 237.9 L36.3 239.6 L36.9 248.0 L33.0 246.9 L28.5 248.6 L27.3 244.7 L26.2 241.3 Z" fill="#b5e68c"/>
<path d="M36.3 239.6 L39.1 233.4 L41.9 229.0 L45.3 225.6 L48.7 223.3 L53.2 222.8 L54.3 225.6 L52.6 233.4 L50.9 237.9 L53.7 242.4 L56.0 249.2 L52.0 249.7 L48.7 249.7 L38.6 249.7 L36.9 248.0 Z" fill="#62b530"/>
<path d="M38.6 249.7 L56.0 249.7 L53.7 253.7 L50.9 255.3 L48.7 257.0 L45.3 255.9 L40.8 255.3 L39.1 253.1 Z" fill="#b5e8a0"/>
<path d="M74.5 239.6 L80.1 234.6 L84.6 233.4 L89.1 230.1 L92.4 227.8 L95.8 233.4 L101.4 233.4 L109.3 236.8 L112.1 241.3 L110.4 244.7 L104.8 245.8 L102.6 249.2 L100.3 252.5 L93.6 249.2 L84.6 249.2 L77.9 252.5 L75.1 246.9 Z" fill="#2d7a1c"/>
<path d="M78.4 227.3 L83.5 225.6 L82.9 229.0 L79.0 229.0 Z" fill="#2d7a1c"/>
<path d="M25.7 237.4 L28.5 237.9 L29.0 242.4 L26.2 243.0 Z" fill="#2e7d1a"/>
<path d="M52.0 263.8 L57.7 263.2 L60.5 266.6 L59.9 270.5 L56.5 273.9 L54.3 271.6 L52.0 267.1 Z" fill="#8fd55a"/>
<path d="M66.1 248.6 L70.0 248.6 L70.0 253.1 L66.6 253.1 Z" fill="#3a8a20"/>
<rect x="146.5" y="218.5" width="94" height="65" fill="#fff" stroke="#a8a8a8" stroke-width="1.3"/>
<rect x="149.5" y="221.7" width="87.6" height="59.5" fill="#e6f3fc"/>
<path d="M177.0 227.8 L179.3 223.3 L184.9 222.2 L189.4 223.3 L190.5 227.8 L187.1 234.6 L183.8 241.3 L182.7 244.7 L179.3 240.2 L177.6 233.4 Z" fill="#f3f8e6"/>
<path d="M164.7 254.8 L173.7 257.0 L174.8 260.4 L178.2 263.8 L175.9 263.8 L171.4 260.4 L166.9 258.1 Z" fill="#edf2da"/>
<path d="M175.9 262.6 L182.7 263.8 L186.0 267.1 L184.9 271.6 L180.4 276.1 L178.2 280.6 L175.9 280.6 L174.8 271.6 L173.7 266.0 Z" fill="#edf2da"/>
<path d="M190.5 243.6 L193.9 240.2 L198.4 239.1 L200.6 240.2 L200.6 252.5 L196.1 253.7 L191.6 252.5 L189.9 248.0 Z" fill="#edf2da"/>
<path d="M189.4 254.8 L196.1 253.7 L202.9 254.8 L207.3 259.3 L205.1 263.8 L202.9 271.6 L198.4 273.9 L196.1 269.4 L193.9 263.8 L190.5 261.5 L189.4 258.1 Z" fill="#edf2da"/>
<path d="M200.6 248.0 L207.3 249.2 L218.6 250.3 L227.6 248.0 L232.0 250.3 L229.8 258.1 L225.3 263.8 L218.6 262.6 L214.1 260.4 L209.6 259.3 L205.1 255.9 Z" fill="#edf2da"/>
<path d="M218.6 269.4 L224.2 267.1 L228.7 268.2 L229.8 273.9 L225.3 275.5 L219.7 273.9 Z" fill="#edf2da"/>
<path d="M151.8 238.5 L154.6 237.4 L160.2 237.9 L161.3 239.6 L161.9 248.0 L158.0 246.9 L153.5 248.6 L152.3 244.7 L151.2 241.3 Z" fill="#edf2da"/>
<path d="M161.3 239.6 L164.1 233.4 L166.9 229.0 L170.3 225.6 L173.7 223.3 L178.2 222.8 L179.3 225.6 L177.6 233.4 L175.9 237.9 L178.7 242.4 L181.0 249.2 L177.0 249.7 L173.7 249.7 L163.6 249.7 L161.9 248.0 Z" fill="#edf2da"/>
<path d="M163.6 249.7 L181.0 249.7 L178.7 253.7 L175.9 255.3 L173.7 257.0 L170.3 255.9 L165.8 255.3 L164.1 253.1 Z" fill="#edf2da"/>
<path d="M199.5 239.6 L205.1 234.6 L209.6 233.4 L214.1 230.1 L217.4 227.8 L220.8 233.4 L226.4 233.4 L234.3 236.8 L237.1 241.3 L235.4 244.7 L229.8 245.8 L227.6 249.2 L225.3 252.5 L218.6 249.2 L209.6 249.2 L202.9 252.5 L200.1 246.9 Z" fill="#edf2da"/>
<path d="M203.4 227.3 L208.5 225.6 L207.9 229.0 L204.0 229.0 Z" fill="#edf2da"/>
<ellipse cx="217.4" cy="244.4" rx="12.4" ry="13.6" fill="#2c7a1e"/>
<ellipse cx="193.7" cy="251.4" rx="10.6" ry="11.8" fill="#47991f"/>
<ellipse cx="195.6" cy="249.2" rx="3.6" ry="3.6" fill="#dff5cf"/>
<ellipse cx="168.6" cy="246.7" rx="8.7" ry="9.6" fill="#69b632"/>
<ellipse cx="170.9" cy="254.2" rx="5.2" ry="5.3" fill="#b6ec8e"/>
<ellipse cx="181.3" cy="268.2" rx="7.2" ry="7.6" fill="#8edb56"/>
<rect x="21.5" y="337.5" width="94" height="64.5" fill="#fff" stroke="#c4c4c4" stroke-width="1.3"/>
<rect x="28" y="343.0" width="80.3" height="1.2" fill="#e4e4e4"/>
<rect x="28" y="360.1" width="80.3" height="1.2" fill="#e4e4e4"/>
<rect x="28" y="378.4" width="80.3" height="1.2" fill="#e4e4e4"/>
<rect x="31.799999999999955" y="378.4" width="11.0" height="17.600000000000023" fill="#4285f4"/>
<rect x="48.09999999999991" y="364.1" width="9.900000000000091" height="14.299999999999955" fill="#4285f4"/>
<rect x="63.59999999999991" y="353.70000000000005" width="10.300000000000182" height="10.099999999999909" fill="#4285f4"/>
<rect x="77.90000000000009" y="353.9" width="10.299999999999955" height="7.399999999999977" fill="#db4437"/>
<rect x="94.09999999999991" y="361.29999999999995" width="9.800000000000182" height="34.700000000000045" fill="#bdbdbd"/>
<rect x="28" y="395.29999999999995" width="80.3" height="1.5" fill="#444"/>
<rect x="73.09999999999991" y="378.20000000000005" width="38.7" height="20.4" fill="#3c3c3c" fill-opacity="0.78"/>
<text x="92.20000000000005" y="394" text-anchor="middle" font-family="Liberation Sans" font-weight="bold" font-size="13" fill="#fff">NEW</text>
<rect x="146.5" y="337.5" width="94" height="64.5" fill="#fff" stroke="#c4c4c4" stroke-width="1.3"/>
<rect x="152.29999999999995" y="342.5" width="1.3" height="25" fill="#b8b8b8"/><rect x="152.29999999999995" y="366.6" width="83" height="1.3" fill="#b8b8b8"/>
<rect x="152.29999999999995" y="371.4" width="1.3" height="25" fill="#b8b8b8"/><rect x="152.29999999999995" y="395.4" width="83" height="1.3" fill="#b8b8b8"/>
<path d="M152.9 366.9 L164.7 366.9 L176.1 349.0 L188.0 358.4 L200.1 346.1 L211.8 346.1 L224.2 343.4 L235.2 342.7" stroke="#4a80dc" stroke-width="2.4" fill="none" stroke-linejoin="round"/>
<path d="M152.9 395.4 L164.1 391.9 L176.1 378.9 L188.0 386.8 L200.1 371.7 L211.8 376.4 L224.2 373.3 L235.2 372.2" stroke="#dc4a36" stroke-width="2.4" fill="none" stroke-linejoin="round"/>
<rect x="271.5" y="337.5" width="94" height="64.5" fill="#fff" stroke="#c4c4c4" stroke-width="1.3"/>
<rect x="278" y="343.0" width="80.7" height="1.2" fill="#e2e2e2"/>
<rect x="278" y="353.69999999999993" width="80.7" height="1.2" fill="#e2e2e2"/>
<rect x="278" y="364.1" width="80.7" height="1.2" fill="#e2e2e2"/>
<rect x="278" y="374.4" width="80.7" height="1.2" fill="#e2e2e2"/>
<rect x="278" y="385.1" width="80.7" height="1.2" fill="#e2e2e2"/>
<path d="M278.5 396 V377.4 Q278.5 375.9 280.0 375.9 H291.29999999999995 Q292.79999999999995 375.9 292.79999999999995 377.4 V396 Z" fill="#5f95ec"/>
<path d="M294.4000000000001 396 V365.5 Q294.4000000000001 364 295.9000000000001 364 H306.70000000000005 Q308.20000000000005 364 308.20000000000005 365.5 V396 Z" fill="#5f95ec"/>
<path d="M311 396 V344.5 Q311 343 312.5 343 H323.9000000000001 Q325.4000000000001 343 325.4000000000001 344.5 V396 Z" fill="#5f95ec"/>
<path d="M344.0999999999999 396 V365.5 Q344.0999999999999 364 345.5999999999999 364 H356.4000000000001 Q357.9000000000001 364 357.9000000000001 365.5 V396 Z" fill="#5f95ec"/>
<rect x="278" y="395.29999999999995" width="80.7" height="1.5" fill="#555"/>
<rect x="21.5" y="417.20000000000005" width="94" height="65" fill="#fff" stroke="#c4c4c4" stroke-width="1.3"/>
<circle cx="67.6" cy="448.4" r="5.6" fill="none" stroke="#dadada" stroke-width="0.7"/>
<circle cx="67.6" cy="448.4" r="10.6" fill="none" stroke="#dadada" stroke-width="0.7"/>
<circle cx="67.6" cy="448.4" r="15.7" fill="none" stroke="#dadada" stroke-width="0.7"/>
<circle cx="67.6" cy="448.4" r="21.2" fill="none" stroke="#dadada" stroke-width="0.7"/>
<path d="M43.6 448.4 L91.6 448.4" stroke="#d8d8d8" stroke-width="0.8"/>
<path d="M50.6 431.4 L84.6 465.4" stroke="#d8d8d8" stroke-width="0.8"/>
<path d="M67.6 424.4 L67.6 472.4" stroke="#d8d8d8" stroke-width="0.8"/>
<path d="M84.6 431.4 L50.6 465.4" stroke="#d8d8d8" stroke-width="0.8"/>
<path d="M52.8 433.4 Q55.7 444.3 61.2 448.6 L57.1 458.9 Q61.9 464.0 67.7 464.8 Q75.0 462.9 77.3 457.5 Q78.3 451.6 75.0 448.0 Q79.8 442.9 79.8 436.9 Q71.4 437.4 68.1 441.1" stroke="#4a80dc" stroke-width="1.7" fill="none" stroke-linejoin="round"/>
<path d="M57.1 458.9 Q60.4 449.4 67.0 446.5 Q77.9 446.5 78.7 458.9 Q71.4 457.5 67.7 451.6 Q64.1 457.5 57.1 458.9 Z" stroke="#dd5533" stroke-width="1.7" fill="none" stroke-linejoin="round"/>
<rect x="146.5" y="417.20000000000005" width="94" height="65" fill="#fff" stroke="#c4c4c4" stroke-width="1.3"/>
<circle cx="172.5999999999999" cy="443" r="19.3" fill="#f6f6f6" stroke="#111" stroke-width="1.7"/>
<circle cx="172.6" cy="426.2" r="1.7" fill="#111"/>
<circle cx="156.9" cy="436.3" r="1.7" fill="#111"/>
<circle cx="188.3" cy="436.3" r="1.7" fill="#111"/>
<circle cx="160.8" cy="455.1" r="1.7" fill="#111"/>
<circle cx="184.7" cy="455.1" r="1.7" fill="#111"/>
<path d="M168.2 443.6 L190 440.6" stroke="#222" stroke-width="2.4"/>
<path d="M168.8 443.5 L190 440.6" stroke="#e0623a" stroke-width="1.2"/>
<circle cx="172.5999999999999" cy="443" r="2.9" fill="#1b8c79" stroke="#111" stroke-width="0.9"/>
<text x="172.5999999999999" y="435" text-anchor="middle" font-family="Liberation Sans" font-size="4.5" fill="#555">Jan</text>
<text x="172.5999999999999" y="457.5" text-anchor="middle" font-family="Liberation Sans" font-size="4.5" fill="#555">80</text>
<circle cx="213.5" cy="443" r="19.3" fill="#f6f6f6" stroke="#111" stroke-width="1.7"/>
<circle cx="213.5" cy="426.2" r="1.7" fill="#111"/>
<circle cx="197.8" cy="436.3" r="1.7" fill="#111"/>
<circle cx="229.2" cy="436.3" r="1.7" fill="#111"/>
<circle cx="201.7" cy="455.1" r="1.7" fill="#111"/>
<circle cx="225.6" cy="455.1" r="1.7" fill="#111"/>
<path d="M212.7 447.2 L216.9000000000001 426.20000000000005" stroke="#222" stroke-width="2.4"/>
<path d="M212.8 446.7 L216.9000000000001 426.20000000000005" stroke="#e0623a" stroke-width="1.2"/>
<circle cx="213.5" cy="443" r="2.9" fill="#1b8c79" stroke="#111" stroke-width="0.9"/>
<text x="213.5" y="435" text-anchor="middle" font-family="Liberation Sans" font-size="4.5" fill="#555">Feb</text>
<text x="213.5" y="457.5" text-anchor="middle" font-family="Liberation Sans" font-size="4.5" fill="#555">55</text>
<rect x="271.5" y="417.20000000000005" width="94" height="65" fill="#fff" stroke="#c4c4c4" stroke-width="1.3"/>
<rect x="278" y="422.79999999999995" width="80.7" height="1.2" fill="#d6d6d6"/>
<rect x="278" y="439.6" width="80.7" height="1.2" fill="#d6d6d6"/>
<rect x="278" y="457.79999999999995" width="80.7" height="1.2" fill="#d6d6d6"/>
<rect x="289.0" y="426.79999999999995" width="2.6" height="34.80000000000007" fill="#5f95ec"/>
<rect x="283" y="432.4" width="14.599999999999909" height="16.5" fill="#5f95ec"/>
<rect x="307.70000000000005" y="430.1" width="2.6" height="28.100000000000023" fill="#5f95ec"/>
<rect x="301.70000000000005" y="436.1" width="14.599999999999909" height="16.100000000000023" fill="#5f95ec"/>
<rect x="326.29999999999995" y="448.1" width="2.6" height="16.799999999999955" fill="#5f95ec"/>
<rect x="320.20000000000005" y="450.1" width="15.0" height="12.899999999999977" fill="#5f95ec"/>
<rect x="345.10000000000014" y="433.79999999999995" width="2.6" height="24.40000000000009" fill="#5f95ec"/>
<rect x="339.0999999999999" y="439.4" width="14.800000000000182" height="16.300000000000068" fill="#5f95ec"/>
<rect x="380" y="279" width="11.6" height="136" fill="#c6c6c6"/>
</svg></div>
<div class="a" style="left:1116px;top:274.89px;font-size:16.6px;line-height:16.6px;color:#222;font-weight:normal;white-space:nowrap;-webkit-text-stroke:0.2px #222">Scatter</div>
<div class="a" style="left:1116px;top:393.89px;font-size:16.6px;line-height:16.6px;color:#222;font-weight:normal;white-space:nowrap;-webkit-text-stroke:0.2px #222">Map</div>
<div class="a" style="left:1116px;top:512.39px;font-size:16.6px;line-height:16.6px;color:#222;font-weight:normal;white-space:nowrap;-webkit-text-stroke:0.2px #222">Other</div>
<div class="a" style="left:1112.3px;top:687.3px;width:20px;height:20px;border:2.2px solid #8a8a8a;border-radius:2px"></div>
<div class="a" style="left:1149.8px;top:688.55px;font-size:17px;line-height:17px;color:#222;font-weight:normal;white-space:nowrap;-webkit-text-stroke:0.2px #222">Aggregate column A</div>
</body></html>
